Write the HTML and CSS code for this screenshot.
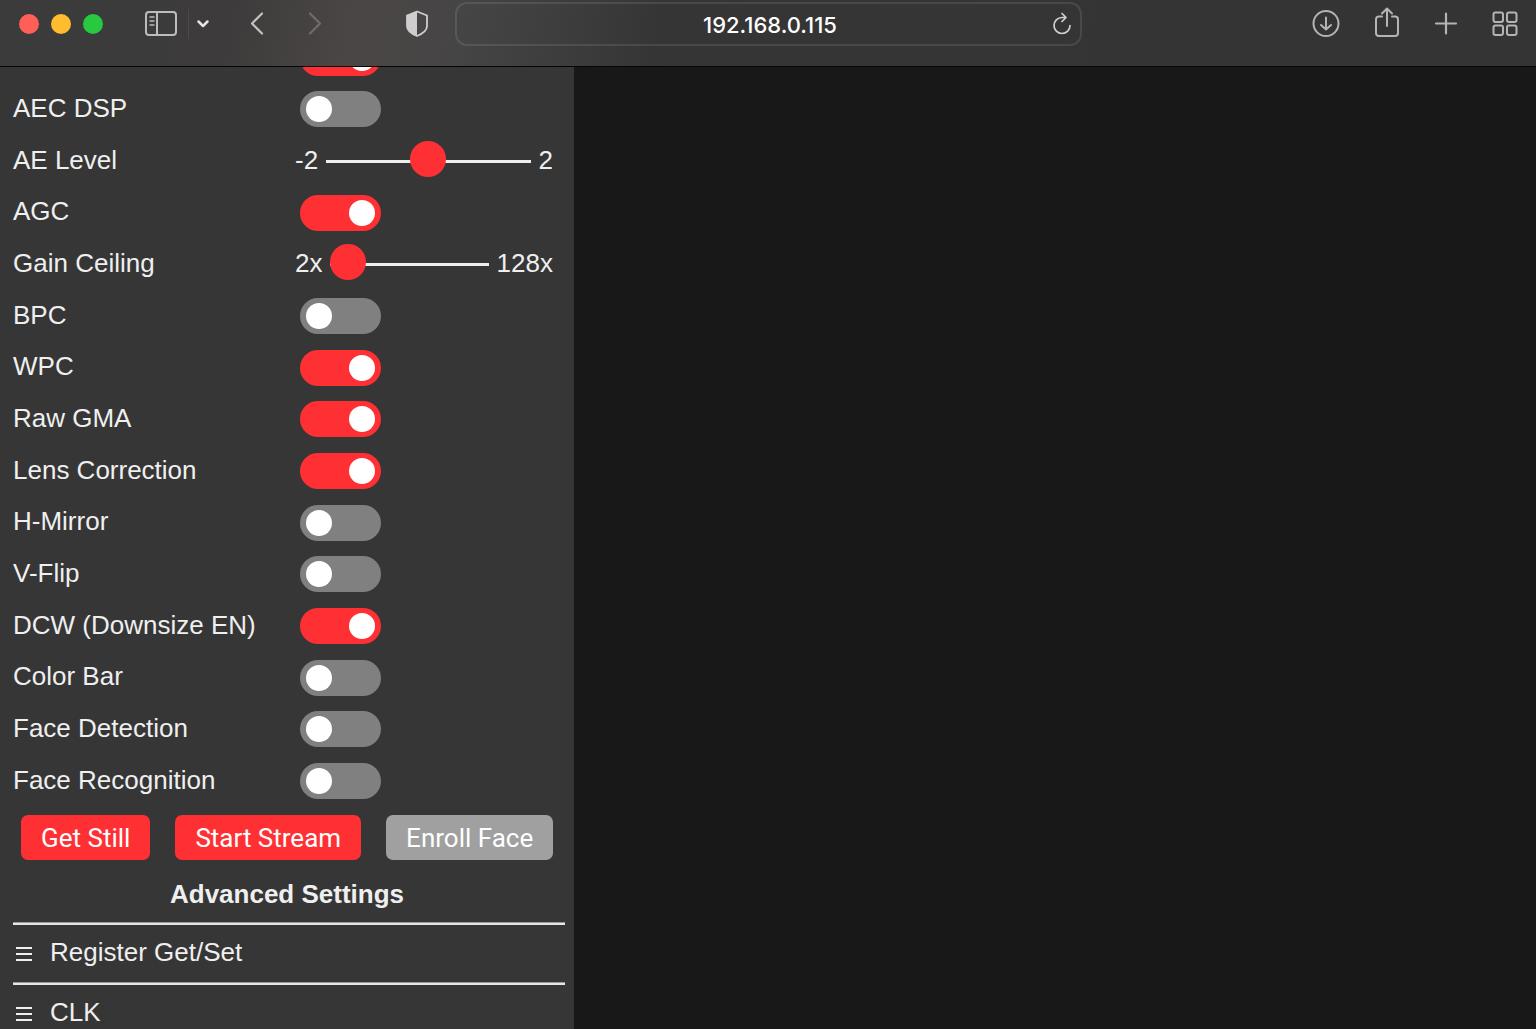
FILE: index.html
```html
<!DOCTYPE html>
<html lang="en">
<head>
<meta charset="utf-8">
<meta name="viewport" content="width=device-width, initial-scale=1">
<title>192.168.0.115</title>
<link rel="stylesheet" href="styles.css">
</head>
<body>
<header class="toolbar">
  <div class="tools tools-left">
    <div class="window-controls">
      <button class="dot dot-close" aria-label="Close"></button>
      <button class="dot dot-minimize" aria-label="Minimize"></button>
      <button class="dot dot-zoom" aria-label="Zoom"></button>
    </div>
    <div class="sidebar-tools">
      <button class="tool" aria-label="Sidebar">
        <svg width="32" height="26" viewBox="0 0 32 26" fill="none" stroke="#bdbcbc" stroke-width="2"><rect x="1" y="1" width="30" height="23" rx="3"/><path d="M12 1v23"/><path d="M4.500 6h5M4.500 10h5M4.500 14h5" stroke-width="1.500"/></svg>
      </button>
      <span class="divider"></span>
      <button class="tool" aria-label="Tab groups">
        <svg width="14" height="10" viewBox="0 0 14 10" fill="none" stroke="#e4e4e4" stroke-width="2.500" stroke-linecap="round" stroke-linejoin="round"><path d="M2.500 2.500L7 7l4.500-4.500"/></svg>
      </button>
    </div>
    <div class="history">
      <button class="tool" aria-label="Back">
        <svg width="16" height="24" viewBox="0 0 16 24" fill="none" stroke="#c4c3c3" stroke-width="2.200" stroke-linecap="round" stroke-linejoin="round"><path d="M13 1.500L3 11.500l10 10"/></svg>
      </button>
      <button class="tool" aria-label="Forward" disabled>
        <svg width="16" height="24" viewBox="0 0 16 24" fill="none" stroke="#6f6b6b" stroke-width="2.200" stroke-linecap="round" stroke-linejoin="round"><path d="M3 1.500l10 10-10 10"/></svg>
      </button>
    </div>
    <button class="tool shield" aria-label="Privacy report">
      <svg width="24" height="28" viewBox="0 0 24 28"><path d="M12 1.500L22 5.500V16C22 20.500 18 23.500 12 26C6 23.500 2 20.500 2 16V5.500Z" fill="none" stroke="#cfcdcd" stroke-width="1.800" stroke-linejoin="round"/><path d="M12 1.500L2 5.500V16C2 20.500 6 23.500 12 26Z" fill="#cfcdcd"/></svg>
    </button>
  </div>
  <form class="address">
    <input class="address-input" type="text" value="192.168.0.115" aria-label="Address">
    <button class="tool" type="button" aria-label="Reload">
      <svg width="20" height="24" viewBox="0 0 20 24" fill="none" stroke="#d0d0d0" stroke-width="1.700" stroke-linecap="round" stroke-linejoin="round"><path d="M18 13.500A8 8 0 1 1 10 5.500H13.500M10 1.500l4 4-4 4"/></svg>
    </button>
  </form>
  <div class="tools tools-right">
    <button class="tool" aria-label="Downloads">
      <svg width="28" height="28" viewBox="0 0 28 28" fill="none" stroke="#b4b4b4" stroke-width="2" stroke-linecap="round" stroke-linejoin="round"><circle cx="14" cy="13.500" r="12.500"/><path d="M14 7.500v12M9 15l5 4.500 5-4.500"/></svg>
    </button>
    <button class="tool" aria-label="Share">
      <svg width="26" height="34" viewBox="0 0 26 34" fill="none" stroke="#b4b4b4" stroke-width="2" stroke-linecap="round" stroke-linejoin="round"><path d="M8 9.500H5Q2 9.500 2 12.500V26Q2 29 5 29H21Q24 29 24 26V12.500Q24 9.500 21 9.500H18M13 19V2M8 6.500L13 1.500l5 5"/></svg>
    </button>
    <button class="tool" aria-label="New tab">
      <svg width="24" height="24" viewBox="0 0 24 24" fill="none" stroke="#b4b4b4" stroke-width="2.200" stroke-linecap="round"><path d="M12 1.500v20M2 11.500h20"/></svg>
    </button>
    <button class="tool" aria-label="Tab overview">
      <svg width="26" height="26" viewBox="0 0 26 26" fill="none" stroke="#b4b4b4" stroke-width="2"><rect x="1.500" y="1.500" width="9.500" height="9.500" rx="2"/><rect x="15" y="1.500" width="9.500" height="9.500" rx="2"/><rect x="1.500" y="14.500" width="9.500" height="9.500" rx="2"/><rect x="15" y="14.500" width="9.500" height="9.500" rx="2"/></svg>
    </button>
  </div>
</header>
<main class="page">
  <section class="panel">
    <div class="settings">
      <div class="row"><span class="row-label"></span><input class="switch" type="checkbox" aria-label="AEC Sensor" checked></div>
      <div class="row"><label class="row-label" for="aec2">AEC DSP</label><input class="switch" type="checkbox" id="aec2"></div>
      <div class="row"><label class="row-label" for="ae_level">AE Level</label><div class="range"><span class="limit">-2</span><input class="slider" type="range" id="ae_level" min="-2" max="2" value="0"><span class="limit">2</span></div></div>
      <div class="row"><label class="row-label" for="agc">AGC</label><input class="switch" type="checkbox" id="agc" checked></div>
      <div class="row"><label class="row-label" for="gainceiling">Gain Ceiling</label><div class="range"><span class="limit">2x</span><input class="slider" type="range" id="gainceiling" min="0" max="6" value="0"><span class="limit">128x</span></div></div>
      <div class="row"><label class="row-label" for="bpc">BPC</label><input class="switch" type="checkbox" id="bpc"></div>
      <div class="row"><label class="row-label" for="wpc">WPC</label><input class="switch" type="checkbox" id="wpc" checked></div>
      <div class="row"><label class="row-label" for="raw_gma">Raw GMA</label><input class="switch" type="checkbox" id="raw_gma" checked></div>
      <div class="row"><label class="row-label" for="lenc">Lens Correction</label><input class="switch" type="checkbox" id="lenc" checked></div>
      <div class="row"><label class="row-label" for="hmirror">H-Mirror</label><input class="switch" type="checkbox" id="hmirror"></div>
      <div class="row"><label class="row-label" for="vflip">V-Flip</label><input class="switch" type="checkbox" id="vflip"></div>
      <div class="row"><label class="row-label" for="dcw">DCW (Downsize EN)</label><input class="switch" type="checkbox" id="dcw" checked></div>
      <div class="row"><label class="row-label" for="colorbar">Color Bar</label><input class="switch" type="checkbox" id="colorbar"></div>
      <div class="row"><label class="row-label" for="face_detect">Face Detection</label><input class="switch" type="checkbox" id="face_detect"></div>
      <div class="row"><label class="row-label" for="face_recognize">Face Recognition</label><input class="switch" type="checkbox" id="face_recognize"></div>
    </div>
    <div class="actions">
      <button class="action">Get Still</button>
      <button class="action">Start Stream</button>
      <button class="action" disabled>Enroll Face</button>
    </div>
    <h2 class="heading">Advanced Settings</h2>
    <hr class="rule">
    <button class="section">
      <svg width="16" height="14" viewBox="0 0 16 14" stroke="#efefef" stroke-width="2"><path d="M0 1h16M0 7h16M0 13h16"/></svg>
      <span class="section-name">Register Get/Set</span>
    </button>
    <hr class="rule">
    <button class="section">
      <svg width="16" height="14" viewBox="0 0 16 14" stroke="#efefef" stroke-width="2"><path d="M0 1h16M0 7h16M0 13h16"/></svg>
      <span class="section-name">CLK</span>
    </button>
  </section>
</main>
</body>
</html>
```
FILE: styles.css
```css
* {
  box-sizing: border-box;
}

body {
  margin: 0;
  height: 100vh;
  display: flex;
  flex-direction: column;
  overflow: hidden;
  background: #181818;
  color: #efefef;
  font-family: "Liberation Sans", Arial, Helvetica, sans-serif;
  font-size: 26px;
  line-height: 30px;
}

button {
  border: 0;
  padding: 0;
  background: none;
  color: inherit;
  font: inherit;
}

/* Browser toolbar */

.toolbar {
  flex: none;
  display: grid;
  grid-template-columns: 1fr minmax(0, 627px) 1fr;
  padding: 2px 0 20px;
  border-bottom: 1px solid #050505;
  background: linear-gradient(100deg, #3b3b3b 0%, #3d3b3b 15%, #4b4646 23%, #464545 30%, #3e3e3e 36%, #353535 43%, #343434 100%);
}

.tools {
  display: flex;
  align-items: center;
}

.tools-left {
  padding-left: 19px;
}

.tools-right {
  justify-content: flex-end;
  gap: 34px;
  padding-right: 18px;
}

.tool {
  display: flex;
}

.window-controls {
  display: flex;
  gap: 12px;
  margin-right: 42px;
}

.dot {
  width: 20px;
  height: 20px;
  border-radius: 50%;
}

.dot-close {
  background: #ff5f57;
}

.dot-minimize {
  background: #febc2e;
}

.dot-zoom {
  background: #28c840;
}

.sidebar-tools {
  display: flex;
  align-items: center;
}

.divider {
  width: 1px;
  height: 30px;
  margin: 0 7px 0 11px;
  background: #4c4a4a;
}

.history {
  display: flex;
  gap: 42px;
  margin-left: 39px;
}

.shield {
  margin-left: 82px;
}

.address {
  display: flex;
  align-items: center;
  height: 44px;
  padding: 0 8px 0 32px;
  border: 2px solid rgba(255, 255, 255, 0.1);
  border-radius: 12px;
}

.address-input {
  flex: 1;
  min-width: 0;
  padding: 2px 0 0;
  border: 0;
  background: none;
  color: #fff;
  font: 500 22px/28px Inter, sans-serif;
  text-align: center;
}

/* Camera settings */

.page {
  flex: 1;
  min-height: 0;
  display: flex;
}

.panel {
  width: 574px;
  padding: 0 9px 0 13px;
  overflow: hidden;
  background: #363636;
}

/* The list is scrolled so that its first row is cut by the toolbar. */
.settings {
  display: grid;
  grid-auto-rows: 1fr;
  min-height: 775px;
  margin-top: -35px;
  padding-right: 12px;
}

.row {
  display: flex;
  align-items: center;
}

.row-label {
  flex: none;
  width: 282px;
}

.row-label,
.limit,
.section-name {
  padding-bottom: 3px;
}

.range {
  flex: 1;
  min-width: 0;
  display: flex;
  align-items: center;
  gap: 8px;
}

.slider {
  flex: 1;
  min-width: 0;
  height: 36px;
  margin: 0;
  appearance: none;
  background: none;
}

.slider::-webkit-slider-runnable-track {
  height: 3px;
  background: #efefef;
}

.slider::-webkit-slider-thumb {
  appearance: none;
  width: 36px;
  height: 36px;
  margin-top: -19px;
  border-radius: 50%;
  background: #ff3034;
}

.switch {
  appearance: none;
  display: flex;
  align-items: center;
  width: 81px;
  height: 36px;
  margin: 0 0 0 5px;
  padding: 0 6px;
  border-radius: 18px;
  background: #808080;
}

.switch::before {
  content: "";
  width: 26px;
  height: 26px;
  border-radius: 50%;
  background: #fff;
}

.switch:checked {
  justify-content: flex-end;
  background: #ff3034;
}

.actions {
  display: flex;
  gap: 25px;
  padding: 8px;
}

.action {
  height: 45px;
  padding: 0 20px;
  border-radius: 7px;
  background: #ff3034;
  color: #fff;
  font: 400 26px/30px Roboto, sans-serif;
  white-space: nowrap;
}

.action:disabled {
  background: #a0a0a0;
}

.heading {
  margin: 11px 4px 13px 0;
  font-size: 26px;
  line-height: 30px;
  text-align: center;
}

.rule {
  height: 3px;
  margin: 0;
  border: 0;
  border-top: 1px solid #999;
  background: #e6e6e6;
}

.section {
  display: flex;
  align-items: center;
  gap: 18px;
  width: 100%;
  height: 57px;
  padding-left: 3px;
}
```
